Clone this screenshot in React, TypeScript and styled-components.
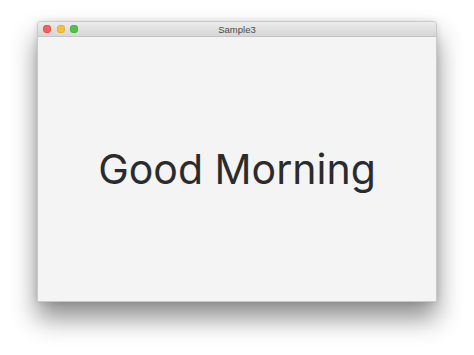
import * as React from "react";
import styled, { createGlobalStyle } from "styled-components";

const GlobalStyle = createGlobalStyle`
  html, body {
    margin: 0;
    padding: 0;
    background: #ffffff;
  }
`;

const Page = styled.div`
  width: 474px;
  height: 355px;
  padding: 21px 0 0 37px;
  box-sizing: border-box;
`;

const Window = styled.div`
  width: 400px;
  height: 281px;
  display: flex;
  flex-direction: column;
  background: #f4f4f4;
  border: 1px solid #c9c9c9;
  border-radius: 4px 4px 0 0;
  box-sizing: border-box;
  box-shadow: 0 16px 26px rgba(0, 0, 0, 0.45), 0 0 6px rgba(0, 0, 0, 0.12);
  overflow: hidden;
`;

const TitleBar = styled.div`
  height: 14px;
  flex: none;
  display: flex;
  align-items: center;
  position: relative;
  padding-left: 5px;
  gap: 5.5px;
  background: linear-gradient(#ececec, #d6d6d6);
  border-bottom: 1px solid #c4c4c4;
`;

const Light = styled.span<{ $color: string; $edge: string }>`
  width: 8px;
  height: 8px;
  border-radius: 50%;
  background: ${(p) => p.$color};
  box-shadow: inset 0 0 0 0.5px ${(p) => p.$edge};
`;

const Title = styled.div`
  position: absolute;
  left: 0;
  right: 0;
  top: 0;
  bottom: 0;
  display: flex;
  align-items: center;
  justify-content: center;
  font-family: "Liberation Sans", Arial, sans-serif;
  font-size: 9.5px;
  color: #4a4a4a;
  pointer-events: none;
`;

const Content = styled.div`
  flex: 1;
  display: flex;
  align-items: center;
  justify-content: center;
`;

const Greeting = styled.div`
  font-family: Inter, "Noto Sans", sans-serif;
  font-size: 41px;
  font-weight: 400;
  color: #2b2b2b;
`;

export default function App() {
  return (
    <Page>
      <GlobalStyle />
      <Window>
        <TitleBar>
          <Light $color="#f2615a" $edge="#d9473f" />
          <Light $color="#f7be3f" $edge="#dca12a" />
          <Light $color="#4fc24c" $edge="#3aa637" />
          <Title>Sample3</Title>
        </TitleBar>
        <Content>
          <Greeting>Good Morning</Greeting>
        </Content>
      </Window>
    </Page>
  );
}
